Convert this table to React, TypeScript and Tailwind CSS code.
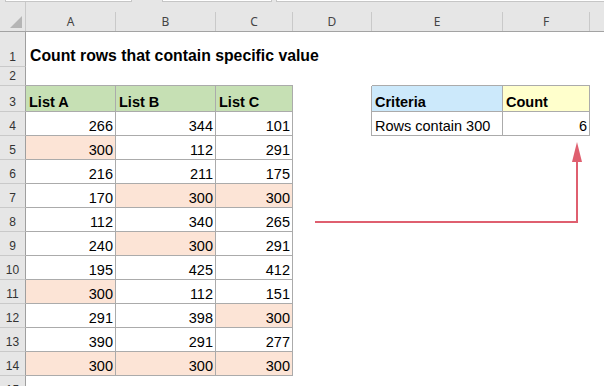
import React from "react";

const colW = ["w-[26px]", "w-[90px]", "w-[100px]", "w-[77px]", "w-[79px]", "w-[131px]", "w-[87px]", "flex-1"];
const letters = ["A", "B", "C", "D", "E", "F", ""];

const data: number[][] = [
  [266, 344, 101],
  [300, 112, 291],
  [216, 211, 175],
  [170, 300, 300],
  [112, 340, 265],
  [240, 300, 291],
  [195, 425, 412],
  [300, 112, 151],
  [291, 398, 300],
  [390, 291, 277],
  [300, 300, 300],
];

function RowHead({ n, h }: { n: string; h: string }) {
  return (
    <div
      className={`${h} w-[26px] shrink-0 bg-[#e6e6e6] border-r border-b border-r-[#9f9f9f] border-b-[#c9c9c9] flex items-end justify-center pb-[3px] text-[12px] leading-none text-[#333]`}
    >
      {n}
    </div>
  );
}

function Cell({
  w,
  h,
  text,
  bold,
  right,
  bg,
  border,
}: {
  w: string;
  h: string;
  text?: string | number;
  bold?: boolean;
  right?: boolean;
  bg?: string;
  border?: "box" | "bottom" | "right" | "none";
}) {
  const b =
    border === "box"
      ? "border-r border-b border-[#ababab]"
      : border === "bottom"
      ? "border-b border-[#ababab]"
      : border === "right"
      ? "border-r border-[#ababab]"
      : "";
  return (
    <div
      className={`${w} ${h} ${b} ${bg ?? "bg-white"} shrink-0 flex items-end ${
        right ? "justify-end pr-[2px]" : "pl-[3px]"
      } ${bold ? "font-bold" : ""} text-[14.5px] leading-[17px] text-black whitespace-nowrap`}
    >
      {text}
    </div>
  );
}

export default function App() {
  return (
    <div className="relative w-[604px] h-[386px] overflow-hidden bg-white font-['Liberation_Sans',Arial,sans-serif]">
      {/* formula bar remnants */}
      <div className="flex h-[2px] bg-[#e6e6e6]">
        <div className="ml-[5px] w-[127px] bg-white border-x border-b border-[#c6c6c6]" />
        <div className="ml-[30px] w-[110px] bg-white border-x border-b border-[#c6c6c6]" />
        <div className="ml-[4px] flex-1 bg-white border-l border-b border-[#c6c6c6]" />
      </div>

      {/* column headers */}
      <div className="flex h-[30px] bg-[#e6e6e6] border-b border-[#a3a3a3]">
        <div className="w-[26px] shrink-0 relative border-r border-[#c9c9c9] flex items-end justify-end">
          <div className="absolute right-[3px] bottom-[3px] w-0 h-0 border-l-[12px] border-l-transparent border-b-[12px] border-b-[#b5b5b5]" />
        </div>
        {letters.map((l, i) => (
          <div key={i} className={`${colW[i + 1]} shrink-0 flex items-end`}>
            <div
              className={`w-full h-[19px] ${
                l ? "border-r border-[#c9c9c9]" : ""
              } flex items-center justify-center text-[12px] text-[#444] font-['Noto_Sans',sans-serif]`}
            >
              {l}
            </div>
          </div>
        ))}
      </div>

      {/* row 1 */}
      <div className="flex">
        <RowHead n="1" h="h-[35px]" />
        <div className="h-[35px] flex-1 flex items-end pl-[4px] pb-[2px] text-[15.8px] leading-[18px] font-bold text-black whitespace-nowrap">
          Count rows that contain specific value
        </div>
      </div>

      {/* row 2 */}
      <div className="flex">
        <RowHead n="2" h="h-[19px]" />
        <Cell w={colW[1]} h="h-[19px]" border="bottom" />
        <Cell w={colW[2]} h="h-[19px]" border="bottom" />
        <Cell w={colW[3]} h="h-[19px]" border="bottom" />
        <Cell w={colW[4]} h="h-[19px]" />
        <Cell w={colW[5]} h="h-[19px]" border="bottom" />
        <Cell w={colW[6]} h="h-[19px]" border="bottom" />
        <Cell w={colW[7]} h="h-[19px]" />
      </div>

      {/* row 3 */}
      <div className="flex">
        <RowHead n="3" h="h-[26px]" />
        <Cell w={colW[1]} h="h-[26px]" border="box" bold text="List A" bg="bg-[#c6e0b4]" />
        <Cell w={colW[2]} h="h-[26px]" border="box" bold text="List B" bg="bg-[#c6e0b4]" />
        <Cell w={colW[3]} h="h-[26px]" border="box" bold text="List C" bg="bg-[#c6e0b4]" />
        <Cell w={colW[4]} h="h-[26px]" border="right" />
        <Cell w={colW[5]} h="h-[26px]" border="box" bold text="Criteria" bg="bg-[#cce9fb]" />
        <Cell w={colW[6]} h="h-[26px]" border="box" bold text="Count" bg="bg-[#ffffcc]" />
        <Cell w={colW[7]} h="h-[26px]" />
      </div>

      {/* data rows */}
      {data.map((r, i) => (
        <div key={i} className="flex">
          <RowHead n={String(i + 4)} h="h-[24px]" />
          {r.map((v, j) => (
            <Cell
              key={j}
              w={colW[j + 1]}
              h="h-[24px]"
              border="box"
              right
              text={v}
              bg={v === 300 ? "bg-[#fce4d6]" : "bg-white"}
            />
          ))}
          {i === 0 ? (
            <>
              <Cell w={colW[4]} h="h-[24px]" border="right" />
              <Cell w={colW[5]} h="h-[24px]" border="box" text="Rows contain 300" />
              <Cell w={colW[6]} h="h-[24px]" border="box" right text={6} />
            </>
          ) : null}
        </div>
      ))}

      {/* row 15 */}
      <div className="flex">
        <RowHead n="15" h="h-[24px]" />
      </div>

      {/* arrow */}
      <svg className="absolute left-0 top-0 pointer-events-none" width="604" height="386">
        <polyline points="315,222 577,222 577,158" fill="none" stroke="#df5f6f" strokeWidth="2" />
        <polygon points="572,162 577,142 582,162" fill="#df5f6f" />
      </svg>
    </div>
  );
}
